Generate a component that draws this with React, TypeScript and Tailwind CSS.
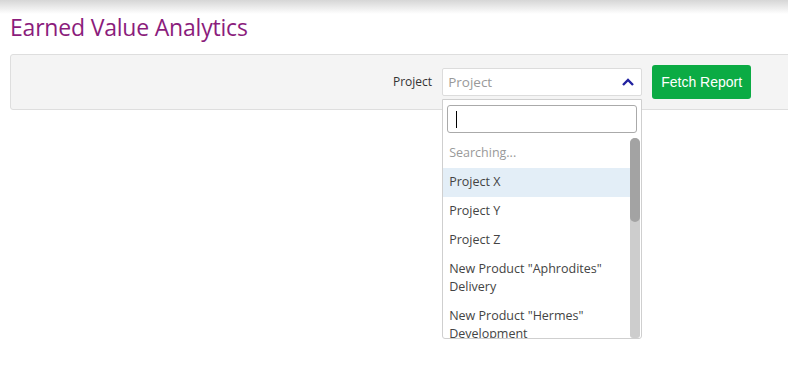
import React from "react";

const options = [
  "Project X",
  "Project Y",
  "Project Z",
  'New Product "Aphrodites" Delivery',
  'New Product "Hermes" Development',
];

export default function App() {
  return (
    <div
      className="relative w-[788px] h-[374px] bg-white overflow-hidden"
      style={{ fontFamily: '"Open Sans", "Noto Sans", sans-serif' }}
    >
      {/* top shadow */}
      <div className="absolute top-0 left-0 right-0 h-[14px] bg-gradient-to-b from-[#d6d6d6] to-white" />

      <div className="relative pt-[12px] pl-[10px]">
        <h1 className="text-[23px] leading-[30px] text-[#8b1c7c] tracking-[-0.2px]">
          Earned Value Analytics
        </h1>

        <div className="mt-[12px] h-[56px] w-[790px] bg-[#f4f4f4] border border-[#dedede] rounded-l-[3px] flex items-center">
          <div className="flex items-center ml-[382px]">
            <span className="text-[12px] text-[#333] mr-[10px]">Project</span>
            <div className="relative">
              <div className="w-[200px] h-[28px] bg-white border border-[#dcdcdc] rounded-[2px] flex items-center justify-between pl-[5px] pr-[6px]">
                <span className="text-[13.5px] text-[#999]">Project</span>
                <svg width="14" height="10" viewBox="0 0 14 10">
                  <path d="M2 8 L7 3 L12 8" fill="none" stroke="#2222a0" strokeWidth="2.4" />
                </svg>
              </div>

              {/* dropdown */}
              <div className="absolute left-0 top-[31px] w-[200px] h-[240px] bg-white border border-[#cfcfcf] rounded-b-[3px] z-10 flex flex-col">
                <div className="px-[4px] pt-[5px]">
                  <div className="h-[28px] border border-[#aaa] rounded-[3px] flex items-center pl-[8px]">
                    <div className="w-[1px] h-[17px] bg-black" />
                  </div>
                </div>
                <div className="flex flex-1 mt-[5px] overflow-hidden">
                  <div className="flex-1 text-[12.5px] text-[#444] overflow-hidden pt-[0.5px]">
                    <div className="h-[29px] px-[6px] flex items-center text-[#999]">Searching...</div>
                    {options.map((o, i) => (
                      <div
                        key={o}
                        className={`px-[6px] py-[5.5px] leading-[18px] ${i === 0 ? "bg-[#e3eef7]" : ""}`}
                      >
                        {o}
                      </div>
                    ))}
                  </div>
                  <div className="w-[10px] mr-[1px] bg-[#cdcdcd] rounded-t-[5px] rounded-b-[3px] relative">
                    <div className="absolute top-0 left-0 w-[10px] h-[84px] bg-[#a3a3a3] rounded-[5px]" />
                  </div>
                </div>
              </div>
            </div>
            <button
              className="ml-[10px] w-[99px] h-[34px] bg-[#0bab44] rounded-[3px] text-white text-[14px]"
              style={{ fontFamily: '"Liberation Sans", Arial, sans-serif' }}
            >
              Fetch Report
            </button>
          </div>
        </div>
      </div>
    </div>
  );
}
